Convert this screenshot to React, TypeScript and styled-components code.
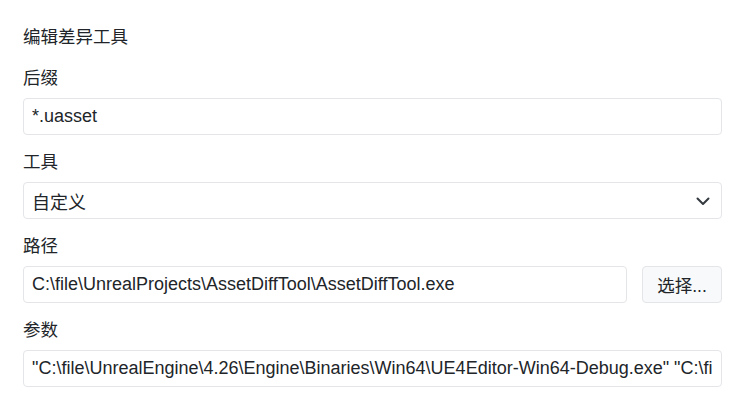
import type { FC } from "react";
import styled, { createGlobalStyle } from "styled-components";

const GlobalStyle = createGlobalStyle`
  html, body {
    margin: 0;
    padding: 0;
    background: #ffffff;
  }
  body {
    font-family: "Liberation Sans", "Noto Sans CJK SC", sans-serif;
    color: #212529;
  }
`;

const Page = styled.div`
  width: 739px;
  box-sizing: border-box;
  padding: 25px 17px 0 23px;
  display: flex;
  flex-direction: column;
`;

const Heading = styled.h3`
  margin: 0 0 18px;
  font-size: 17.5px;
  font-weight: 400;
  line-height: 24px;
  color: #212529;
`;

const Field = styled.div`
  display: flex;
  flex-direction: column;
  margin-bottom: 16px;
`;

const Label = styled.label`
  font-size: 17.5px;
  line-height: 23px;
  margin-bottom: 8px;
`;

const Row = styled.div`
  display: flex;
  gap: 15px;
`;

const Box = styled.div`
  flex: 1 1 auto;
  min-width: 0;
  height: 37px;
  box-sizing: border-box;
  border: 1px solid #e3e5e8;
  border-radius: 4px;
  padding: 0 9px 0 8px;
  display: flex;
  align-items: center;
  font-size: 18px;
  white-space: nowrap;
  overflow: hidden;
  background: #fff;
`;

const Value = styled.span`
  flex: 1;
  overflow: hidden;
`;

const Chevron = styled.svg`
  width: 16px;
  height: 16px;
  margin-right: 1px;
  flex-shrink: 0;
`;

const PickButton = styled.button`
  width: 80px;
  height: 37px;
  box-sizing: border-box;
  border: 1px solid #e3e5e8;
  border-radius: 4px;
  background: #f8f9fa;
  font-family: inherit;
  font-size: 17.5px;
  color: #212529;
  padding: 0;
`;

type InputProps = { value: string; select?: boolean };

const Input: FC<InputProps> = ({ value, select }) => (
  <Box>
    <Value>{value}</Value>
    {select && (
      <Chevron viewBox="0 0 16 16" fill="none">
        <path
          d="M2.5 5.5 8 11l5.5-5.5"
          stroke="#343a40"
          strokeWidth="2"
          strokeLinecap="round"
          strokeLinejoin="round"
        />
      </Chevron>
    )}
  </Box>
);

const App: FC = () => (
  <>
    <GlobalStyle />
    <Page>
      <Heading>编辑差异工具</Heading>
      <Field>
        <Label>后缀</Label>
        <Input value="*.uasset" />
      </Field>
      <Field>
        <Label>工具</Label>
        <Input value="自定义" select />
      </Field>
      <Field>
        <Label>路径</Label>
        <Row>
          <Input value="C:\file\UnrealProjects\AssetDiffTool\AssetDiffTool.exe" />
          <PickButton>选择...</PickButton>
        </Row>
      </Field>
      <Field>
        <Label>参数</Label>
        <Input value={'"C:\\file\\UnrealEngine\\4.26\\Engine\\Binaries\\Win64\\UE4Editor-Win64-Debug.exe" "C:\\fil'} />
      </Field>
    </Page>
  </>
);

export default App;
